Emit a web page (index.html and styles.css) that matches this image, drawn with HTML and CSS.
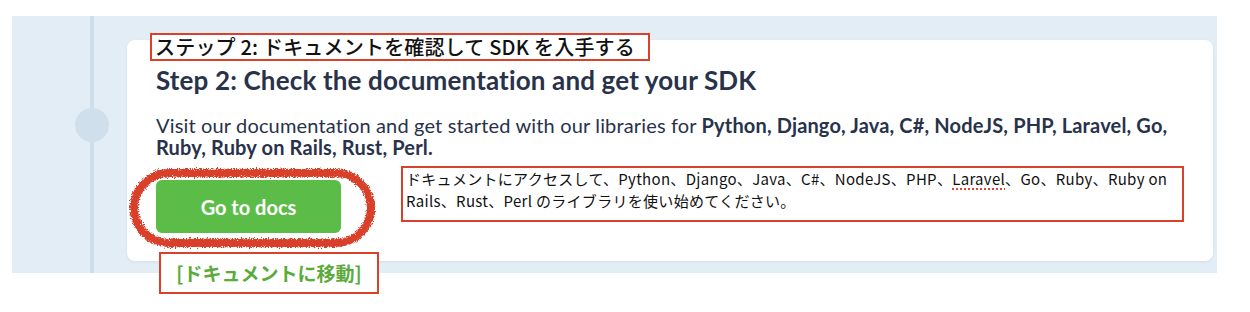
FILE: index.html
```html
<!DOCTYPE html>
<html lang="ja">
<head>
    <meta charset="UTF-8">
    <meta name="viewport" content="width=device-width, initial-scale=1.0">
    <title>Step 2: Check the documentation</title>
    <link rel="stylesheet" href="styles.css">
</head>
<body>

    <div class="panel">
        <div class="timeline">
            <div class="track">
                <div class="seg top"></div>
                <div class="dot"></div>
                <div class="seg"></div>
            </div>
        </div>

        <div class="card">
            <div class="note note-title">ステップ 2: ドキュメントを確認して SDK を入手する</div>

            <h2>Step 2: Check the documentation and get your SDK</h2>
            <p class="lead">Visit our documentation and get started with our libraries for <b>Python, Django, Java, C#, NodeJS, PHP, Laravel, Go, Ruby, Ruby on Rails, Rust, Perl.</b></p>

            <div class="actions">
                <div class="cta">
                    <!-- hand drawn marker ring round the button -->
                    <svg class="scribble" width="251" height="82" viewBox="0 0 251 82">
                        <defs>
                            <filter id="rough" x="-10%" y="-20%" width="120%" height="140%">
                                <feTurbulence type="fractalNoise" baseFrequency="0.85" numOctaves="2" seed="5" result="noise"/>
                                <feDisplacementMap in="SourceGraphic" in2="noise" scale="7" xChannelSelector="R" yChannelSelector="G"/>
                            </filter>
                            <filter id="fray" x="-10%" y="-20%" width="120%" height="140%">
                                <feTurbulence type="fractalNoise" baseFrequency="1.6" numOctaves="1" seed="11" result="noise"/>
                                <feDisplacementMap in="SourceGraphic" in2="noise" scale="6" xChannelSelector="G" yChannelSelector="R"/>
                            </filter>
                        </defs>
                        <rect x="7" y="6" width="237" height="70" rx="35" fill="none" stroke="#d9412b" stroke-width="8" filter="url(#rough)"/>
                        <rect x="5" y="4" width="241" height="74" rx="37" fill="none" stroke="#d9412b" stroke-width="3" opacity="0.7" filter="url(#fray)"/>
                        <rect x="10" y="9" width="231" height="64" rx="32" fill="none" stroke="#d9412b" stroke-width="2" opacity="0.6" filter="url(#fray)"/>
                    </svg>
                    <a class="btn" href="#">Go to docs</a>
                    <div class="note note-btn">[ドキュメントに移動]</div>
                </div>

                <div class="note note-text">ドキュメントにアクセスして、Python、Django、Java、C#、NodeJS、PHP、<span class="typo">Laravel</span>、Go、Ruby、Ruby on Rails、Rust、Perl のライブラリを使い始めてください。</div>
            </div>
        </div>
    </div>

</body>
</html>
```

FILE: styles.css
```css
/* General reset */
* {
    margin: 0;
    padding: 0;
    box-sizing: border-box;
}

html,
body {
    height: 100%;
}

body {
    background-color: #fff;
    font-family: Lato, "Noto Sans CJK JP", sans-serif;
    color: #28324a;
}

.panel {
    display: flex;
    width: 1205px;
    height: 257px;
    margin: 16px 0 0 12px;
    background-color: #e3edf6;
}

/* timeline rail on the left */
.timeline {
    width: 115px;
    flex-shrink: 0;
}

.track {
    display: flex;
    flex-direction: column;
    align-items: center;
    width: 34px;
    height: 100%;
    margin-left: 63px;
}

.seg {
    width: 4px;
    flex: 1;
    background-color: #cfdeeb;
}

.seg.top {
    flex: none;
    height: 92px;
}

.dot {
    width: 34px;
    height: 34px;
    border-radius: 50%;
    background-color: #d0dfec;
}

/* card */
.card {
    position: relative;
    flex: 1;
    margin: 24px 12px 12px 0;
    padding: 24px 29px 0;
    background-color: #fff;
    border-radius: 8px;
    box-shadow: 0 1px 3px rgba(40, 60, 90, 0.08);
}

h2 {
    font-size: 26px;
    line-height: 32px;
    font-weight: 700;
    letter-spacing: 0.15px;
}

.lead {
    margin-top: 18px;
    font-size: 20px;
    line-height: 22px;
    letter-spacing: 0.15px;
}

.lead b {
    font-weight: 700;
}

.actions {
    display: flex;
    align-items: flex-start;
    margin-top: 8px;
}

.cta {
    position: relative;
    margin-top: 14px;
}

.btn {
    display: flex;
    justify-content: center;
    align-items: center;
    width: 185px;
    height: 53px;
    border-radius: 6px;
    background-color: #5bbd48;
    color: #fff;
    font-size: 20px;
    font-weight: 700;
    text-decoration: none;
}

.scribble {
    position: absolute;
    left: -29px;
    top: -13px;
}

/* translator notes */
.note {
    border: 2px solid #d9412b;
    background-color: #fff;
    font-family: "Noto Sans CJK JP", sans-serif;
    color: #111;
}

.note-title {
    position: absolute;
    left: 23px;
    top: -7px;
    width: 500px;
    height: 28px;
    padding: 0 3px;
    font-size: 20px;
    font-weight: 500;
    line-height: 24px;
    letter-spacing: 0.2px;
    white-space: nowrap;
    overflow: hidden;
}

.note-btn {
    position: absolute;
    left: 3px;
    top: 72px;
    width: 220px;
    height: 42px;
    font-size: 19px;
    font-weight: 700;
    line-height: 38px;
    text-align: center;
    color: #5aab3a;
}

.note-text {
    width: 783px;
    height: 56px;
    margin-left: 60px;
    padding: 0 3px;
    font-size: 15px;
    line-height: 22px;
    letter-spacing: 0.3px;
}

.typo {
    text-decoration: underline dotted #e0453a;
    text-decoration-thickness: 2px;
    text-underline-offset: 3px;
}
```
